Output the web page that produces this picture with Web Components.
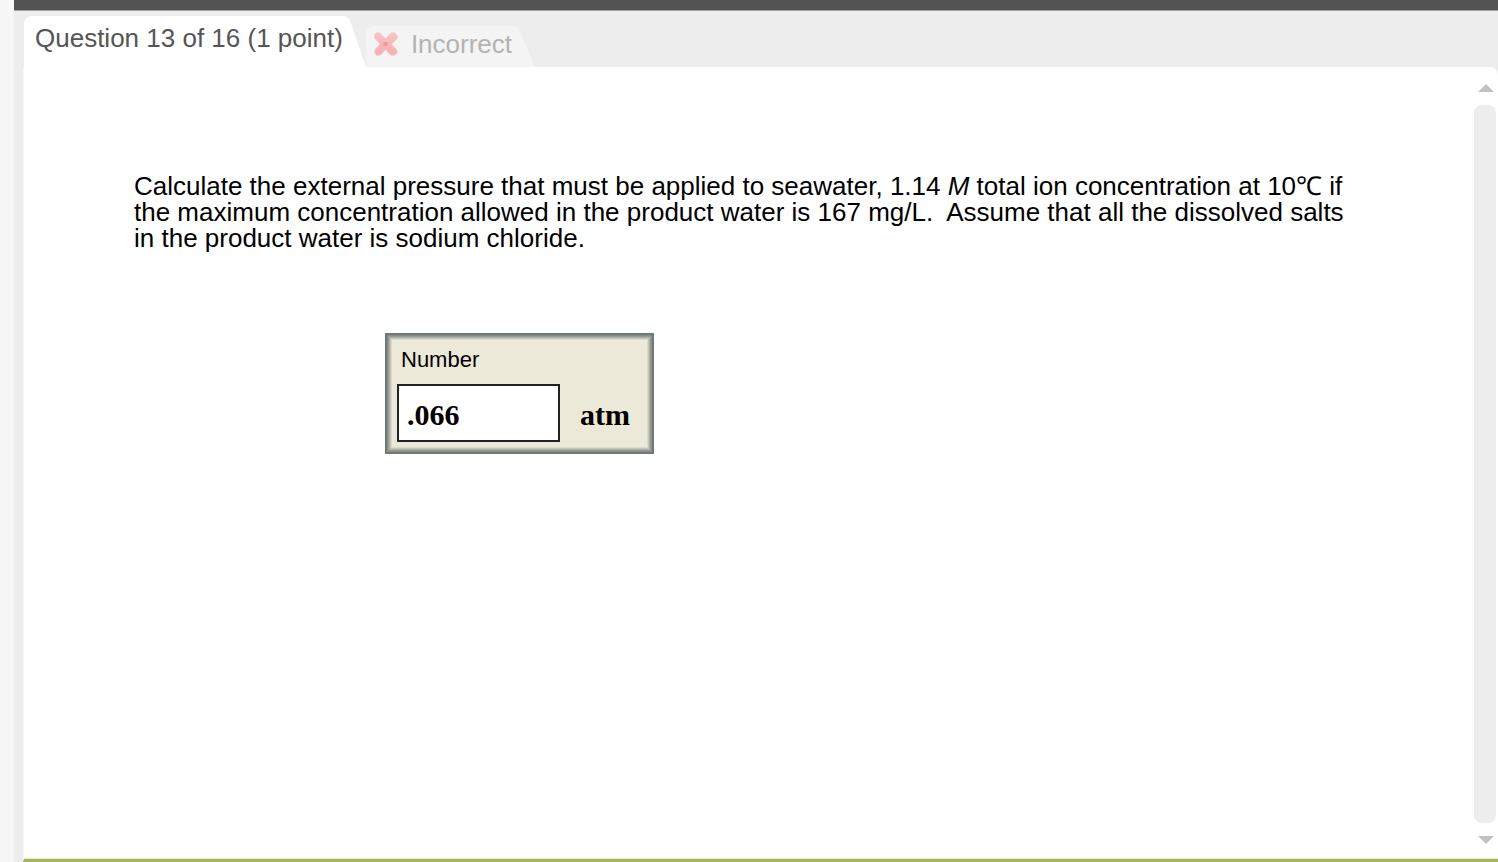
<!DOCTYPE html>
<html lang="en">
<head>
<meta charset="utf-8">
<title>Question 13 of 16</title>
<style>
html, body { height: 100%; margin: 0; }
body { font: 26px/26px "Liberation Sans", Arial, sans-serif; color: #000; background: #f7f7f7; }
</style>
</head>
<body>
<quiz-frame>
  <quiz-tab slot="tabs" active>Question 13 of 16 (1 point)</quiz-tab>
  <quiz-tab slot="tabs"><cross-icon slot="icon"></cross-icon>Incorrect</quiz-tab>
  <quiz-question>
    Calculate the external pressure that must be applied to seawater, 1.14 <i>M</i> total ion concentration at 10℃ if the maximum concentration allowed in the product water is 167 mg/L.&nbsp; Assume that all the dissolved salts in the product water is sodium chloride.
    <number-entry slot="answer" label="Number" value=".066" unit="atm"></number-entry>
  </quiz-question>
  <scroll-rail slot="rail"></scroll-rail>
</quiz-frame>
<script>
function define(name, html, setup) {
  const template = document.createElement('template');
  template.innerHTML = html;
  customElements.define(name, class extends HTMLElement {
    constructor() {
      super();
      this.attachShadow({ mode: 'open' }).append(template.content.cloneNode(true));
    }
    connectedCallback() { if (setup) setup(this, this.shadowRoot); }
  });
}

define('quiz-frame', `
  <style>
    :host { display: flex; flex-direction: column; box-sizing: border-box; min-height: 100vh; margin-left: 14px; background: #ededed; }
    .bar { height: 10px; background: #525252; border-bottom: 1px solid #a6a2a2; }
    nav { display: flex; align-items: flex-end; padding: 5px 0 0 10px; }
    main { flex: 1; display: flex; margin-left: 9px; border-left: 1px solid #f6f6f6; border-bottom: 3px solid #a5b557; border-top-right-radius: 8px; background: #fff; box-shadow: inset 0 -1px #e3e5da; }
    .content { flex: 1; min-width: 0; }
  </style>
  <div class="bar"></div>
  <nav><slot name="tabs"></slot></nav>
  <main><div class="content"><slot></slot></div><slot name="rail"></slot></main>`);

define('quiz-tab', `
  <style>
    :host { display: flex; height: 41px; color: #b3b3b3; --fill: #f4f4f4; }
    :host([active]) { height: 51px; color: #555; --fill: #fff; }
    .face { display: flex; gap: 12px; padding: 5px 0 0 7px; background: var(--fill); border-top-left-radius: 8px; white-space: nowrap; }
    :host([active]) .face { padding: 9px 0 0 11px; }
    svg { width: 23px; height: 100%; flex: none; fill: var(--fill); }
  </style>
  <div class="face"><slot name="icon"></slot><span><slot></slot></span></div>
  <svg viewBox="0 0 24 50" preserveAspectRatio="none" aria-hidden="true"><path d="M0 0C5 0 7 3 9 9L24 50H0Z"/></svg>`);

define('cross-icon', `
  <style>
    :host { display: block; width: 26px; height: 26px; }
    svg { display: block; width: 26px; height: 28px; }
  </style>
  <svg viewBox="0 0 26 28" role="img" aria-label="Incorrect answer">
    <defs><linearGradient id="g" x1="0" y1="0" x2="0" y2="1"><stop offset="0" stop-color="#f6c4c4"/><stop offset="1" stop-color="#f6aeb2"/></linearGradient></defs>
    <path fill="url(#g)" stroke="#f8d5cf" d="M3.500 1.500L7 2L12.500 7.500L18 2L21.500 1.500L24.500 4.500L24 8L18.500 13L24 19L24.500 22L21 24.500L17.500 24L12.500 19L7.500 24L3.500 24.500L1.500 22L2 18.500L7 13L1.500 7V4Z"/>
    <path d="M10.500 11h4v4h-4z" fill="#f5979c"/>
  </svg>`);

define('quiz-question', `
  <style>
    :host { display: block; padding: 106px 120px 0 110px; }
    p { margin: 0; max-width: 1220px; }
    .answer { display: flex; padding: 82px 0 0 251px; }
  </style>
  <p><slot></slot></p>
  <div class="answer"><slot name="answer"></slot></div>`);

define('number-entry', `
  <style>
    :host { display: block; padding: 14px 24px 12px 12px; background: #ece9d8;
      box-shadow: inset 0 0 0 2px #6f7a78, inset 0 0 0 3px #858d89, inset 0 0 0 4px #979c95, inset 0 0 0 5px #acafa5, inset 0 0 0 6px #c5c5b7, inset 0 0 0 7px #dcdacb; }
    label { display: block; padding-left: 4px; margin-bottom: 11px; font-size: 22px; line-height: 26px; }
    .row { display: flex; align-items: center; gap: 20px; font: bold 30px/34px "Liberation Serif", "Times New Roman", serif; }
    input { box-sizing: border-box; width: 163px; height: 58px; padding: 4px 8px 0; border: 2px solid #222; border-radius: 0; background: #fff; color: #000; font: inherit; outline: 0; }
    span { padding-top: 4px; }
  </style>
  <label for="n"></label>
  <div class="row"><input id="n" type="text" inputmode="decimal"><span></span></div>`,
  (host, root) => {
    root.querySelector('label').textContent = host.getAttribute('label');
    root.querySelector('input').value = host.getAttribute('value');
    root.querySelector('span').textContent = host.getAttribute('unit');
  });

define('scroll-rail', `
  <style>
    :host { display: flex; flex-direction: column; align-items: center; width: 22px; padding: 17px 2px 15px 0; }
    button { display: block; width: 22px; height: 8px; padding: 0; border: 0; background: none; }
    svg { display: block; margin: auto; width: 18px; height: 8px; fill: #c2c2c2; }
    .thumb { flex: 1; width: 22px; margin: 13px 0; border-radius: 8px; background: #ededed; }
  </style>
  <button type="button" aria-label="Scroll up"><svg viewBox="0 0 18 8"><path d="M10 0L18 8H2Z"/></svg></button>
  <div class="thumb"></div>
  <button type="button" aria-label="Scroll down"><svg viewBox="0 0 18 8"><path d="M2 0H18L10 8Z"/></svg></button>`);
</script>
</body>
</html>
